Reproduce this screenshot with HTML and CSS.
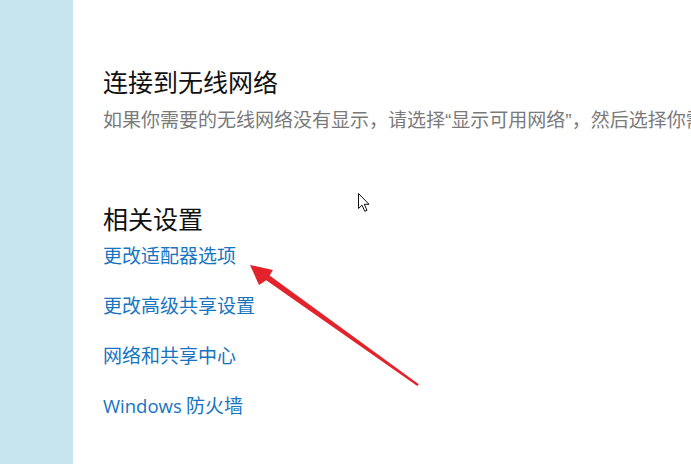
FILE: index.html
```html
<!DOCTYPE html>
<html lang="zh-CN">
<head>
<meta charset="utf-8">
<title>网络和 Internet 设置</title>
<link rel="stylesheet" href="styles.css">
</head>
<body>
<div class="page">
  <aside class="sidebar"></aside>
  <main class="content">
    <h1 class="title">连接到无线网络</h1>
    <p class="desc">如果你需要的无线网络没有显示，请选择<span class="q">“</span>显示可用网络<span class="q">”</span>，然后选择你需要的网络。</p>
    <h2 class="title section">相关设置</h2>
    <nav class="links">
      <a class="link" href="#">更改适配器选项</a>
      <a class="link" href="#">更改高级共享设置</a>
      <a class="link" href="#">网络和共享中心</a>
      <a class="link" href="#"><span class="latin">Windows</span> 防火墙</a>
    </nav>
  </main>
  <svg class="cursor" width="14" height="21" viewBox="0 0 14 21">
    <path d="M1.5 1.5 L1.5 16.5 L5 13.2 L7.8 19.3 L10 18.3 L7.3 12.3 L12 12.3 Z" fill="#fff" stroke="#111" stroke-width="1" stroke-linejoin="miter"/>
  </svg>
  <svg class="annot" width="691" height="464" viewBox="0 0 691 464">
    <polygon points="250,265 273,270 269.6,275.4 418.8,384.3 417.3,386 266.2,280.2 259,285" fill="#e3232b"/>
  </svg>
</div>
</body>
</html>
```
FILE: styles.css
```css
html, body {
  margin: 0;
  padding: 0;
  background: #ffffff;
}
body {
  font-family: "Noto Sans CJK SC", "Noto Sans", sans-serif;
}
.page {
  position: relative;
  display: flex;
  width: 691px;
  height: 464px;
  overflow: hidden;
}
.sidebar {
  flex: 0 0 73px;
  background: #c7e5ef;
}
.content {
  flex: 1;
  min-width: 0;
  padding: 64px 0 0 30px;
  overflow: hidden;
  white-space: nowrap;
}
.title {
  margin: 0;
  font-size: 25px;
  font-weight: 400;
  line-height: 34px;
  color: #111111;
}
.desc {
  margin: 8px 0 0;
  font-size: 19px;
  line-height: 26px;
  color: #7a7a7a;
}
.q {
  font-family: "Liberation Sans", sans-serif;
}
.section {
  margin-top: 67px;
}
.links {
  display: flex;
  flex-direction: column;
  align-items: flex-start;
  gap: 24px;
  margin-top: 7px;
}
.link {
  font-size: 19px;
  line-height: 26px;
  color: #1674c0;
  text-decoration: none;
}
.latin {
  font-family: "Open Sans", "Noto Sans", sans-serif;
  font-size: 18.5px;
}
.cursor {
  position: absolute;
  left: 357px;
  top: 192px;
}
.annot {
  position: absolute;
  left: 0;
  top: 0;
  pointer-events: none;
}
```
